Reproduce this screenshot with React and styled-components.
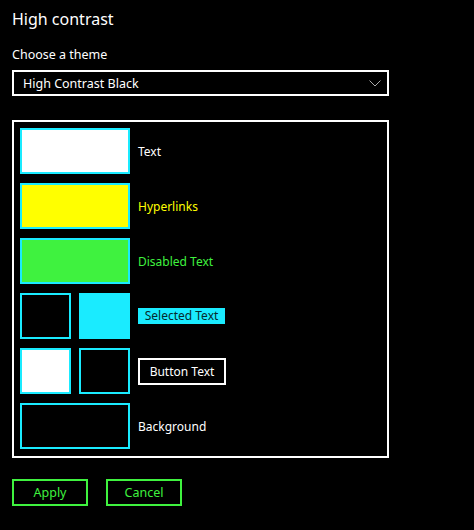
import React from "react";
import styled, { createGlobalStyle } from "styled-components";

const CYAN = "#1aebff";
const GREEN = "#3ff23f";
const YELLOW = "#ffff00";

const GlobalStyle = createGlobalStyle`
  html, body {
    margin: 0;
    background: #000;
  }
  body {
    font-family: "Noto Sans", "Open Sans", sans-serif;
    color: #fff;
  }
`;

const rows = [
  { swatches: [{ fill: "#fff", wide: true }], label: "Text", kind: "plain", color: "#fff" },
  { swatches: [{ fill: YELLOW, wide: true }], label: "Hyperlinks", kind: "plain", color: YELLOW },
  { swatches: [{ fill: GREEN, wide: true }], label: "Disabled Text", kind: "plain", color: GREEN },
  { swatches: [{ fill: "#000" }, { fill: CYAN }], label: "Selected Text", kind: "selected" },
  { swatches: [{ fill: "#fff" }, { fill: "#000" }], label: "Button Text", kind: "button" },
  { swatches: [{ fill: "#000", wide: true }], label: "Background", kind: "plain", color: "#fff" },
];

const App = () => {
  return (
    <Page>
      <GlobalStyle />
      <Title>High contrast</Title>
      <FieldLabel>Choose a theme</FieldLabel>
      <Select>
        <span>High Contrast Black</span>
        <svg width="12" height="7" viewBox="0 0 12 7">
          <path d="M0.5 0.5 L6 6 L11.5 0.5" fill="none" stroke="#aaa" strokeWidth="1" />
        </svg>
      </Select>

      <Preview>
        {rows.map((row) => (
          <Row key={row.label}>
            <Swatches>
              {row.swatches.map((s, i) => (
                <Swatch key={i} $fill={s.fill} $wide={s.wide} />
              ))}
            </Swatches>
            {row.kind === "plain" && <Label $color={row.color}>{row.label}</Label>}
            {row.kind === "selected" && <Selected>{row.label}</Selected>}
            {row.kind === "button" && <ButtonSample>{row.label}</ButtonSample>}
          </Row>
        ))}
      </Preview>

      <Actions>
        <ActionButton>Apply</ActionButton>
        <ActionButton>Cancel</ActionButton>
      </Actions>
    </Page>
  );
};

const Page = styled.div`
  width: 474px;
  height: 530px;
  box-sizing: border-box;
  padding: 8px 0 0 12px;
  background: #000;
`;

const Title = styled.div`
  font-size: 16px;
  line-height: 22px;
  color: #fff;
`;

const FieldLabel = styled.div`
  margin-top: 16px;
  font-size: 12.5px;
  line-height: 18px;
`;

const Select = styled.div`
  margin-top: 6px;
  width: 377px;
  height: 26px;
  box-sizing: border-box;
  border: 2px solid #fff;
  display: flex;
  align-items: center;
  justify-content: space-between;
  padding: 0 6px 0 9px;
  font-size: 12.5px;

  svg {
    margin-top: 1px;
  }
`;

const Preview = styled.div`
  margin-top: 24px;
  width: 377px;
  box-sizing: border-box;
  border: 2px solid #fff;
  padding: 6px 6px 7px;
  display: flex;
  flex-direction: column;
  gap: 9px;
`;

const Row = styled.div`
  display: flex;
  align-items: center;
  gap: 8px;
  height: 46px;
`;

const Swatches = styled.div`
  display: flex;
  gap: 8px;
  width: 110px;
  height: 100%;
`;

const Swatch = styled.div`
  width: ${(p) => (p.$wide ? "110px" : "51px")};
  height: 46px;
  box-sizing: border-box;
  border: 2px solid ${CYAN};
  background: ${(p) => p.$fill};
`;

const Label = styled.div`
  font-size: 12px;
  color: ${(p) => p.$color};
`;

const Selected = styled.div`
  background: ${CYAN};
  color: #062a2e;
  font-size: 12px;
  line-height: 16px;
  width: 87px;
  white-space: nowrap;
  text-align: center;
`;

const ButtonSample = styled.div`
  width: 88px;
  height: 27px;
  box-sizing: border-box;
  border: 2px solid #fff;
  display: flex;
  align-items: center;
  justify-content: center;
  font-size: 12px;
`;

const Actions = styled.div`
  display: flex;
  gap: 18px;
  margin-top: 21px;
`;

const ActionButton = styled.div`
  width: 76px;
  height: 27px;
  box-sizing: border-box;
  border: 2px solid ${GREEN};
  color: ${GREEN};
  display: flex;
  align-items: center;
  justify-content: center;
  font-size: 12.5px;
`;

export default App;
